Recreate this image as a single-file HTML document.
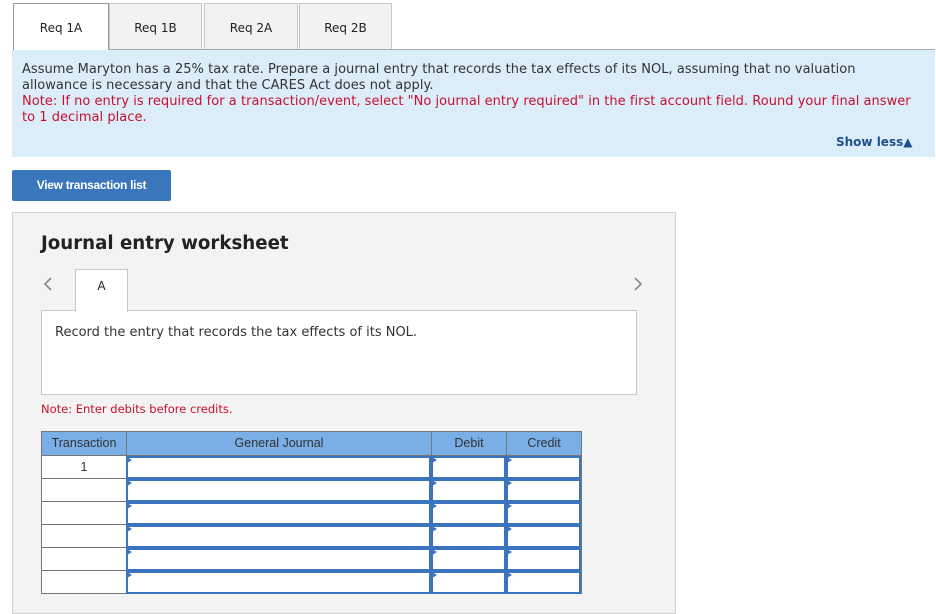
<!DOCTYPE html>
<html><head><style>
body{margin:0;width:936px;height:605px;background:#fff;position:relative;font-family:"DejaVu Sans",Verdana,sans-serif;overflow:hidden}
.a{position:absolute}
.tab{position:absolute;top:3px;height:46px;background:#f2f2f2;border:1px solid #c8c8c8;border-bottom:none;font-size:12px;color:#222;text-align:center;line-height:48px;box-sizing:border-box}
.t{font-size:13px;white-space:nowrap}
</style></head><body>
<div class="a" style="left:13px;top:49px;width:922px;height:1px;background:#aaa"></div>
<div class="tab" style="left:13px;width:96px;height:48px;background:#fff;border-color:#999">Req 1A</div>
<div class="tab" style="left:109px;width:93px">Req 1B</div>
<div class="tab" style="left:204px;width:94px">Req 2A</div>
<div class="tab" style="left:299px;width:93px">Req 2B</div>
<div class="a" style="left:12px;top:50px;width:923px;height:107px;background:#dcedfa"></div>
<div class="a t" style="left:22px;top:62px;line-height:16px;color:#333;letter-spacing:0.03px">Assume Maryton has a 25% tax rate. Prepare a journal entry that records the tax effects of its NOL, assuming that no valuation<br>allowance is necessary and that the CARES Act does not apply.<br><span style="color:#c8102e">Note: If no entry is required for a transaction/event, select "No journal entry required" in the first account field. Round your final answer<br>to 1 decimal place.</span></div>
<div class="a t" style="left:836px;top:135px;font-weight:bold;color:#1f4e8c;font-size:12px">Show less&#9650;</div>
<div class="a" style="left:12px;top:170px;width:159px;height:31px;background:#3a76bb;border-radius:2px;color:#fff;font:bold 12px 'Liberation Sans',Arial,sans-serif;text-align:center;line-height:31px;letter-spacing:-0.3px">View transaction list</div>
<div class="a" style="left:12px;top:212px;width:662px;height:400px;background:#f3f3f3;border:1px solid #d0d0d0"></div>
<div class="a" style="left:41px;top:233px;font-size:18.2px;font-weight:bold;color:#222">Journal entry worksheet</div>
<svg class="a" style="left:42px;top:276px" width="12" height="16"><path d="M9 2L3 8l6 6" stroke="#888" stroke-width="1.6" fill="none"/></svg>
<svg class="a" style="left:632px;top:276px" width="12" height="16"><path d="M3 2l6 6-6 6" stroke="#888" stroke-width="1.6" fill="none"/></svg>
<div class="a" style="left:41px;top:310px;width:594px;height:83px;background:#fff;border:1px solid #c8c8c8"></div>
<div class="a" style="left:75px;top:269px;width:51px;height:42px;background:#fff;border:1px solid #c8c8c8;border-bottom:none;font-size:12px;text-align:center;line-height:32px;color:#222">A</div>
<div class="a t" style="left:55px;top:325px;color:#333">Record the entry that records the tax effects of its NOL.</div>
<div class="a t" style="left:41px;top:402px;font-size:11.5px;color:#c8102e">Note: Enter debits before credits.</div>
<div class="a" style="left:41px;top:431px;width:541px;height:163px;background:#777"></div>
<div class="a" style="left:42px;top:432px;width:84px;height:23px;background:#7aaee6;font:12.5px 'Liberation Sans',Arial;color:#333;text-align:center;line-height:23px">Transaction</div>
<div class="a" style="left:127px;top:432px;width:304px;height:23px;background:#7aaee6;font:12.5px 'Liberation Sans',Arial;color:#333;text-align:center;line-height:23px">General Journal</div>
<div class="a" style="left:432px;top:432px;width:74px;height:23px;background:#7aaee6;font:12.5px 'Liberation Sans',Arial;color:#333;text-align:center;line-height:23px">Debit</div>
<div class="a" style="left:507px;top:432px;width:74px;height:23px;background:#7aaee6;font:12.5px 'Liberation Sans',Arial;color:#333;text-align:center;line-height:23px">Credit</div>
<div id="rows"></div>
<script>
var h='';for(var i=0;i<6;i++){var y=456+i*23;
h+='<div class="a" style="left:42px;top:'+y+'px;width:84px;height:22px;background:#fff;font:12.5px Liberation Sans,Arial;color:#333;text-align:center;line-height:22px">'+(i==0?'1':'')+'</div>';
[[126,305],[431,75],[506,75]].forEach(function(c){h+='<div class="a" style="left:'+c[0]+'px;top:'+y+'px;width:'+c[1]+'px;height:23px;background:#fff;border:2px solid #3b74bd;box-sizing:border-box"></div><div class="a" style="left:'+(c[0]+1)+'px;top:'+(y+1)+'px;width:0;height:0;border-left:5px solid #3b74bd;border-top:3px solid transparent;border-bottom:3px solid transparent"></div>';});}
document.getElementById('rows').innerHTML=h;
</script>
</body></html>
